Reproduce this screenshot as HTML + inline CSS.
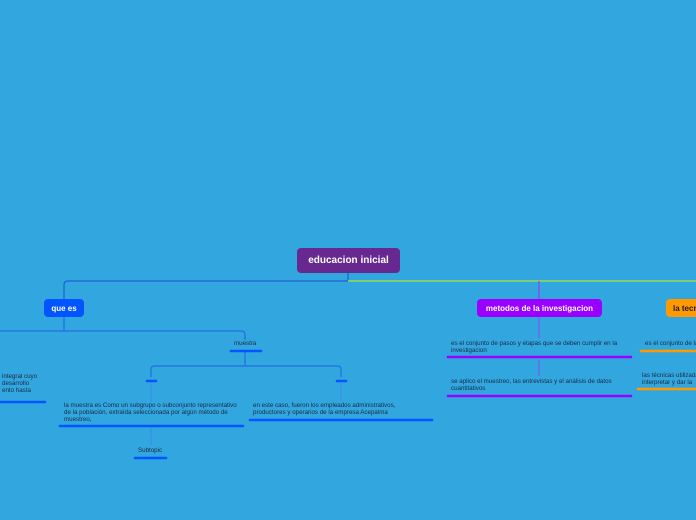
<!DOCTYPE html>
<html><head><meta charset="utf-8"><style>
body{margin:0;width:696px;height:520px;background:#32a6df;position:relative;overflow:hidden;font-family:"Liberation Sans",sans-serif}
.box{position:absolute;border-radius:4px;color:#fff;font-weight:bold;display:flex;align-items:center;justify-content:center;white-space:nowrap}
.t{position:absolute;font-size:6.2px;line-height:7px;color:#1b2a44;white-space:nowrap}
</style></head><body>
<svg width="696" height="520" style="position:absolute;left:0;top:0">
<g fill="none" stroke-width="1.2">
<path d="M348 273V281H68Q64 281 64 285V299" stroke="#1f5fd8"/>
<path d="M348 281H696" stroke="#a8e23a"/>
<path d="M539 281V299" stroke="#9a3cf0"/>
<path d="M539 317V338M539 360V376" stroke="#7a5cf0"/>
<path d="M64 317V331M0 331H241Q245 331 245 335V340" stroke="#1f6fe0"/>
<path d="M245 352V366M155 366H337Q341 366 341 369V377M151 377V369Q151 366 155 366" stroke="#1f6fe0"/>
<path d="M151 383V402M341 383V401M151 428V445" stroke="#3b8ee8"/>
</g>
<g stroke-linecap="round" stroke-width="2.6">
<path d="M231 351H261M147 381H156M337 381H346M60 426H243M250 420H432M135 458H166M0 402H45" stroke="#0055ff"/>
<path d="M448 357H631M448 396H631" stroke="#9900ff"/>
<path d="M641 351H696M638 389H696" stroke="#ff9900"/>
</g>
</svg>
<div class="box" style="left:297px;top:248px;width:103px;height:25px;background:#67298f;font-size:10px">educacion inicial</div>
<div class="box" style="left:44px;top:299px;width:40px;height:18px;background:#0055ff;font-size:8px">que es</div>
<div class="box" style="left:477px;top:299px;width:125px;height:18px;background:#9900ff;font-size:8px">metodos de la investigacion</div>
<div class="box" style="left:666px;top:299px;width:60px;height:18px;background:#ff9900;font-size:8px;color:#1a1a1a;justify-content:flex-start;padding-left:7px">la tecnica</div>
<div class="t" style="left:234px;top:340px">muestra</div>
<div class="t" style="left:2px;top:373px">integral cuyo<br>desarrollo<br>ento hasta</div>
<div class="t" style="left:64px;top:402px">la muestra es Como un subgrupo o subconjunto representativo<br>de la población, extraída seleccionada por algún método de<br>muestreo,</div>
<div class="t" style="left:253px;top:402px">en este caso, fueron los empleados administrativos,<br>productores y operarios de la empresa Acepalma</div>
<div class="t" style="left:138px;top:447px">Subtopic</div>
<div class="t" style="left:451px;top:340px">es el conjunto de pasos y etapas que se deben cumplir en la<br>investigacion</div>
<div class="t" style="left:451px;top:378px">se aplico el muestreo, las entrevistas y el análisis de datos<br>cuantitativos</div>
<div class="t" style="left:645px;top:340px">es el conjunto de la</div>
<div class="t" style="left:642px;top:372px">las técnicas utilizadas<br>interpretar y dar la</div>
</body></html>
